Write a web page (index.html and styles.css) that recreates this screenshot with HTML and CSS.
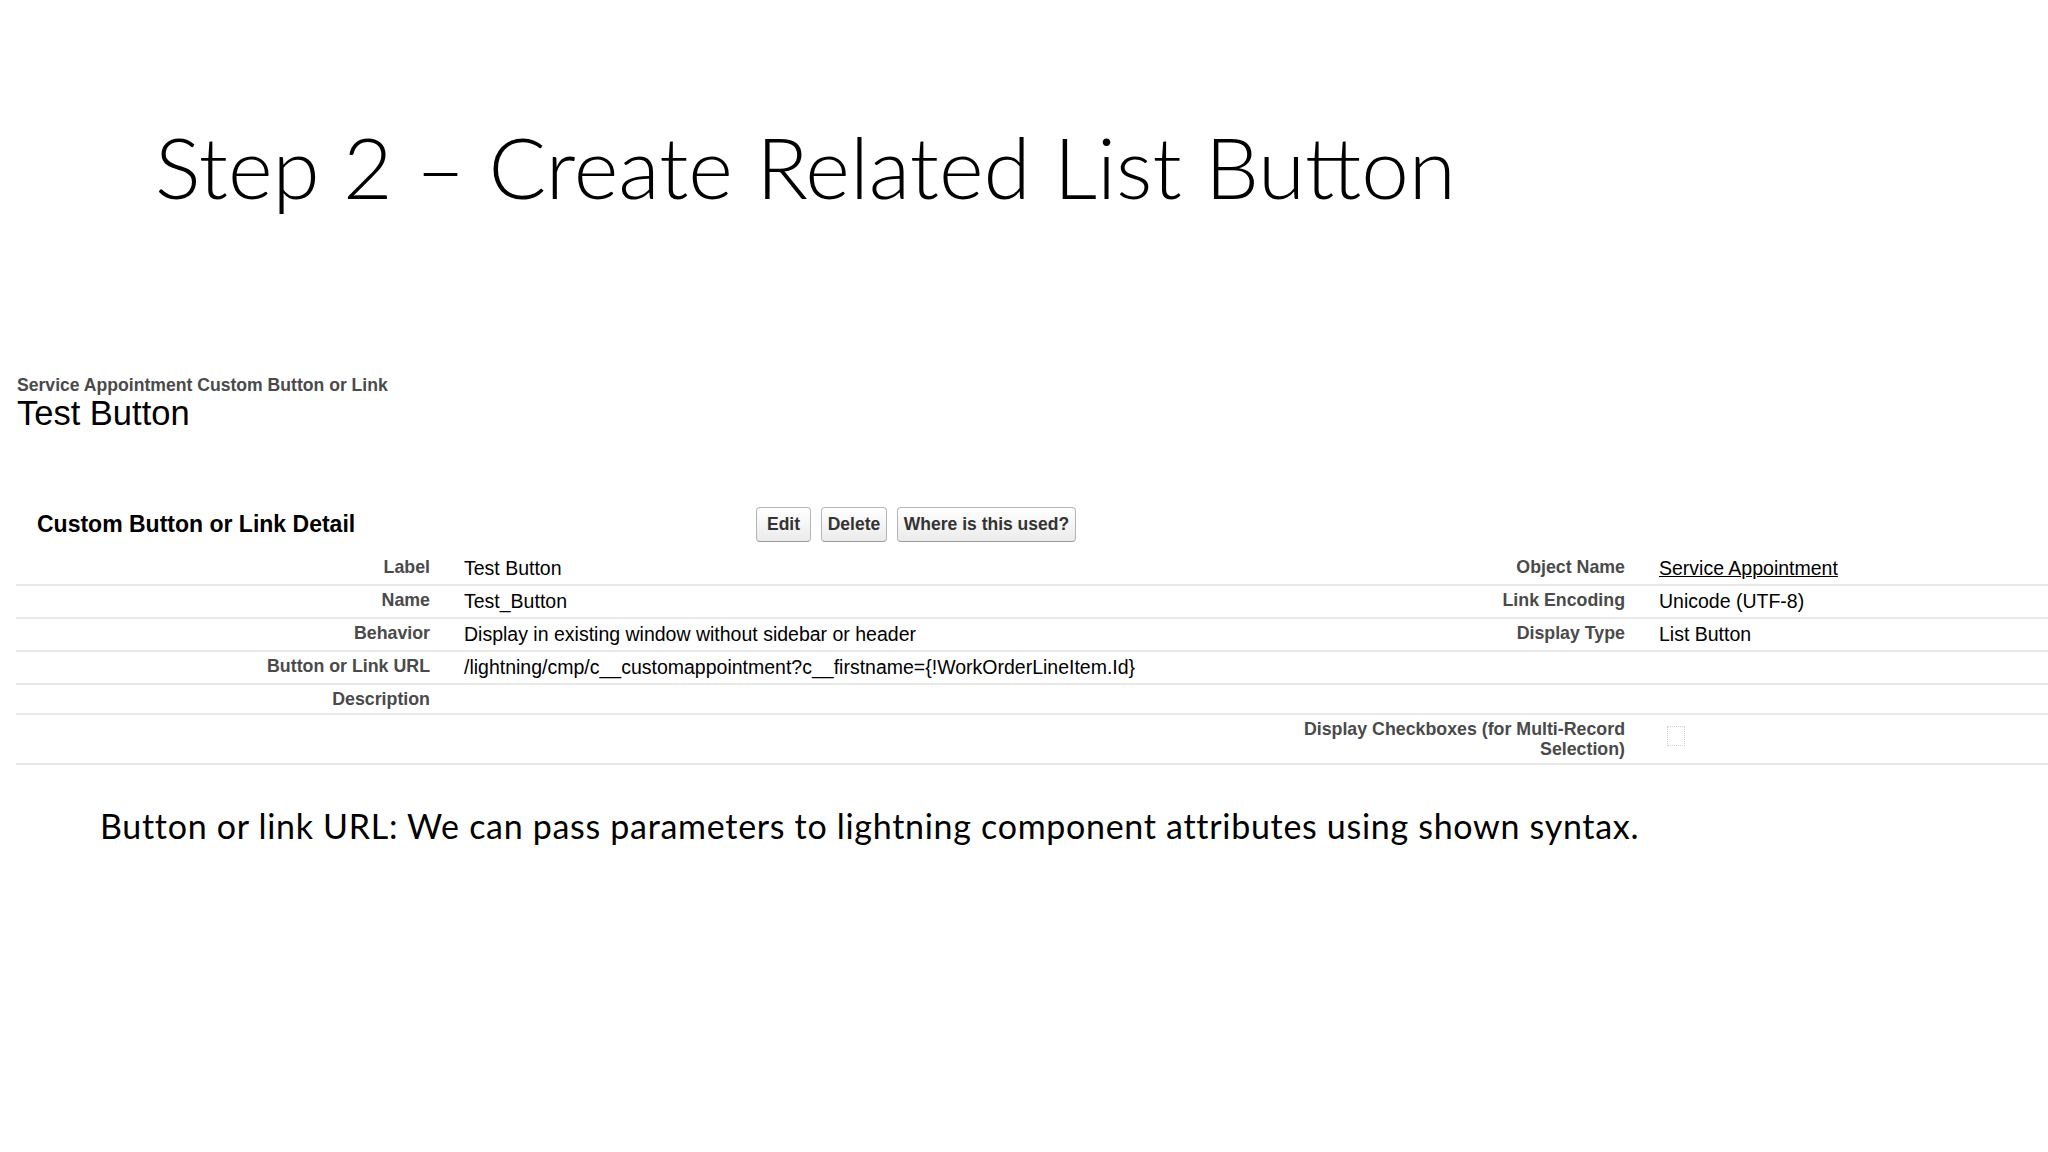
FILE: index.html
```html
<!DOCTYPE html>
<html lang="en">
<head>
<meta charset="utf-8">
<title>Step 2 – Create Related List Button</title>
<link rel="stylesheet" href="styles.css">
</head>
<body>
<div class="slide">
  <h1 class="slide-title">Step 2 – Create Related List Button</h1>

  <section class="sf">
    <div class="sf-type">Service Appointment Custom Button or Link</div>
    <div class="sf-name">Test Button</div>

    <div class="pb-header">
      <h2 class="pb-title">Custom Button or Link Detail</h2>
      <div class="pb-buttons">
        <button class="btn btn-edit">Edit</button>
        <button class="btn btn-delete">Delete</button>
        <button class="btn btn-where">Where is this used?</button>
      </div>
    </div>

    <div class="detail">
      <div class="row">
        <div class="lbl">Label</div>
        <div class="val">Test Button</div>
        <div class="lbl">Object Name</div>
        <div class="val"><a class="link" href="#">Service Appointment</a></div>
      </div>
      <div class="row">
        <div class="lbl">Name</div>
        <div class="val">Test_Button</div>
        <div class="lbl">Link Encoding</div>
        <div class="val">Unicode (UTF-8)</div>
      </div>
      <div class="row">
        <div class="lbl">Behavior</div>
        <div class="val">Display in existing window without sidebar or header</div>
        <div class="lbl">Display Type</div>
        <div class="val">List Button</div>
      </div>
      <div class="row">
        <div class="lbl">Button or Link URL</div>
        <div class="val">/lightning/cmp/c__customappointment?c__firstname={!WorkOrderLineItem.Id}</div>
        <div class="lbl"></div>
        <div class="val"></div>
      </div>
      <div class="row">
        <div class="lbl">Description</div>
        <div class="val"></div>
        <div class="lbl"></div>
        <div class="val"></div>
      </div>
      <div class="row">
        <div class="lbl"></div>
        <div class="val"></div>
        <div class="lbl">Display Checkboxes (for Multi-Record Selection)</div>
        <div class="val"><span class="checkbox"></span></div>
      </div>
    </div>
  </section>

  <p class="caption">Button or link URL: We can pass parameters to lightning component attributes using shown syntax.</p>
</div>
</body>
</html>
```

FILE: styles.css
```css
html, body {
  margin: 0;
  padding: 0;
  background: #ffffff;
}

.slide {
  width: 2048px;
  height: 1152px;
  overflow: hidden;
  padding-top: 115px;
  box-sizing: border-box;
}

.slide-title {
  margin: 0 0 157px 0;
  padding-left: 155px;
  font-family: "Lato", "Open Sans", sans-serif;
  font-weight: 300;
  font-size: 85.5px;
  line-height: 1.2;
  color: #000000;
  white-space: nowrap;
}

.sf {
  padding-left: 16px;
  font-family: "Liberation Sans", Arial, sans-serif;
}

.sf-type {
  padding-left: 1px;
  font-size: 17.6px;
  font-weight: bold;
  line-height: 20px;
  color: #4a4a4a;
}

.sf-name {
  padding-left: 1px;
  font-size: 34.5px;
  line-height: 36px;
  color: #000000;
}

.pb-header {
  display: flex;
  align-items: center;
  margin-top: 76px;
  height: 35px;
}

.pb-title {
  margin: 0;
  width: 740px;
  padding-left: 21px;
  box-sizing: border-box;
  font-size: 23px;
  font-weight: bold;
  color: #000000;
}

.pb-buttons {
  display: flex;
  gap: 10px;
}

.btn {
  height: 35px;
  padding: 0;
  border: 1px solid #b5b5b5;
  border-bottom-color: #9a9a9a;
  border-radius: 4px;
  background: linear-gradient(#ffffff, #ebebeb);
  font-family: "Liberation Sans", Arial, sans-serif;
  font-size: 17.5px;
  font-weight: bold;
  color: #333333;
  text-align: center;
}

.btn-edit { width: 55px; }
.btn-delete { width: 66px; }
.btn-where { width: 179px; }

.detail {
  margin-top: 11px;
}

.row {
  display: grid;
  grid-template-columns: 414px 829px 366px 1fr;
  align-items: start;
  padding: 4px 0;
  border-bottom: 2px solid #e8e8e8;
}

.lbl {
  text-align: right;
  font-size: 17.8px;
  font-weight: bold;
  line-height: 20px;
  color: #4a4a4a;
}

.val {
  padding-left: 34px;
  font-size: 19.5px;
  line-height: 23px;
  color: #000000;
  white-space: nowrap;
}

.val:empty {
  line-height: 20px;
}

.link {
  color: #000000;
  text-decoration: underline;
}

.checkbox {
  display: inline-block;
  width: 18px;
  height: 20px;
  margin: 7px 0 0 8px;
  border: 1px dotted #d2d2d2;
  box-sizing: border-box;
}

.caption {
  margin: 41px 0 0 0;
  padding-left: 100px;
  font-family: "Lato", "Open Sans", sans-serif;
  font-size: 34px;
  line-height: 1.2;
  letter-spacing: 0.7px;
  color: #000000;
  white-space: nowrap;
}
```
